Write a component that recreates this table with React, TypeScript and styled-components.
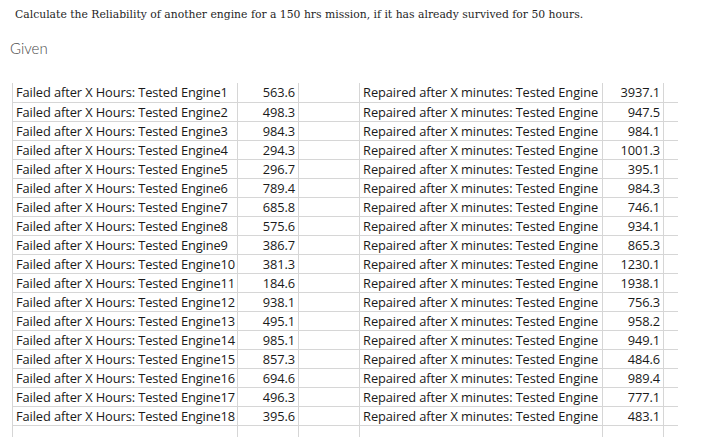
import React from 'react';
import styled, { createGlobalStyle } from 'styled-components';

const GlobalStyle = createGlobalStyle`
    html, body {
        margin: 0;
        padding: 0;
        background: #ffffff;
        overflow: hidden;
    }
`;

const Page = styled.div`
    width: 717px;
    height: 437px;
    padding: 7px 0 0 12px;
    box-sizing: border-box;
`;

const Question = styled.p`
    margin: 0 0 0 3px;
    font-family: "DejaVu Serif", "Liberation Serif", serif;
    font-size: 10.8px;
    line-height: 16px;
    color: #1f1f1f;
`;

const Given = styled.p`
    margin: 16px 0 0 -2px;
    font-family: Lato, "Open Sans", sans-serif;
    font-weight: 300;
    font-size: 15px;
    line-height: 18px;
    color: #4a4a4a;
`;

const Sheet = styled.table`
    margin-top: 26px;
    border-collapse: collapse;
    table-layout: fixed;
    font-family: "Open Sans", "Liberation Sans", sans-serif;
    font-size: 12.85px;
    color: #1a1a1a;
`;

const Cell = styled.td<{ $width?: number; $num?: boolean; $stub?: boolean }>`
    width: ${p => p.$width ?? 61}px;
    height: 19px;
    padding: 0 ${p => (p.$num ? 3 : 2)}px 0 3px;
    box-sizing: border-box;
    border: 1px solid #d6d6d6;
    border-top: none;
    border-right: ${p => (p.$stub ? 'none' : '1px solid #d6d6d6')};
    text-align: ${p => (p.$num ? 'right' : 'left')};
    white-space: nowrap;
    overflow: hidden;
    line-height: 18px;
    letter-spacing: -0.1px;
`;

const failed = [563.6, 498.3, 984.3, 294.3, 296.7, 789.4, 685.8, 575.6, 386.7, 381.3, 184.6, 938.1, 495.1, 985.1, 857.3, 694.6, 496.3, 395.6];
const repaired = [3937.1, 947.5, 984.1, 1001.3, 395.1, 984.3, 746.1, 934.1, 865.3, 1230.1, 1938.1, 756.3, 958.2, 949.1, 484.6, 989.4, 777.1, 483.1];

const App: React.FC = () => {
    return (
        <React.Fragment>
            <GlobalStyle />
            <Page>
                <Question>
                    Calculate the Reliability of another engine for a 150 hrs mission, if it has already survived for 50 hours.
                </Question>
                <Given>Given</Given>
                <Sheet>
                    <tbody>
                        {failed.map((f, i) => (
                            <tr key={i}>
                                <Cell $width={223}>Failed after X Hours: Tested Engine{i + 1}</Cell>
                                <Cell $num>{f.toFixed(1)}</Cell>
                                <Cell></Cell>
                                <Cell $width={243}>Repaired after X minutes: Tested Engine</Cell>
                                <Cell $num>{repaired[i].toFixed(1)}</Cell>
                                <Cell $width={14} $stub></Cell>
                            </tr>
                        ))}
                        <tr>
                            <Cell $width={223}></Cell>
                            <Cell></Cell>
                            <Cell></Cell>
                            <Cell $width={243}></Cell>
                            <Cell></Cell>
                            <Cell $width={14} $stub></Cell>
                        </tr>
                    </tbody>
                </Sheet>
            </Page>
        </React.Fragment>
    );
};

export default App;
